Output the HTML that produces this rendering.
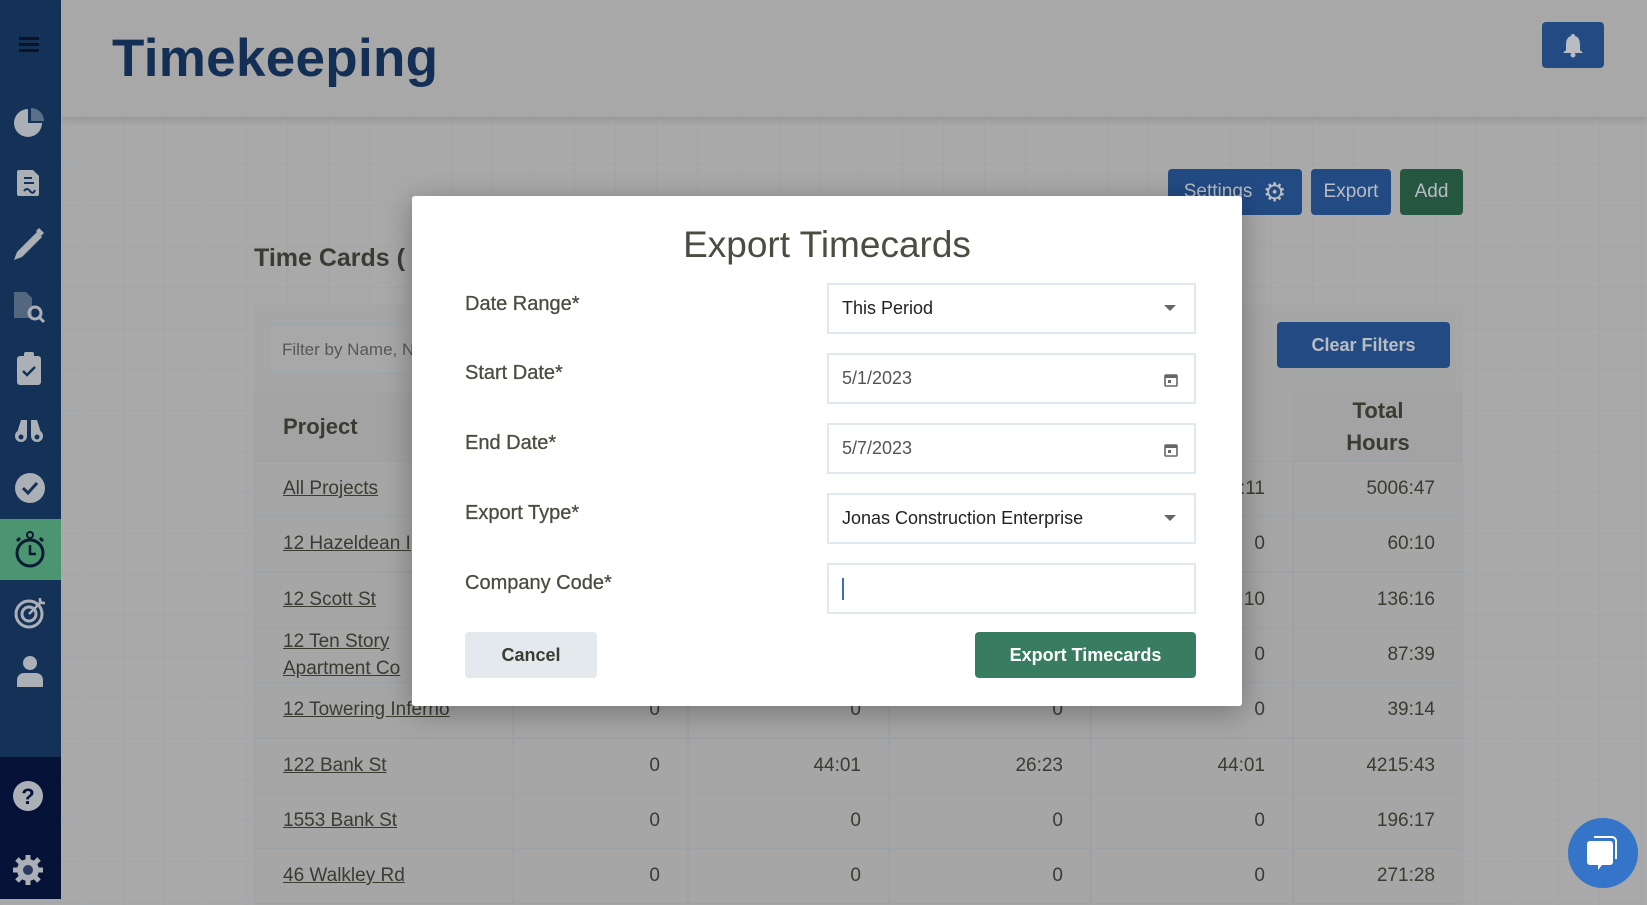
<!DOCTYPE html>
<html><head><meta charset="utf-8"><style>
*{box-sizing:border-box;margin:0;padding:0}
body{width:1647px;height:899px;overflow:hidden;position:relative;font-family:"Liberation Sans",sans-serif;background:#a9a9a9;
background-image:linear-gradient(#a3a6a8 1px,transparent 1px),linear-gradient(90deg,#a3a6a8 1px,transparent 1px);background-size:41px 41px;background-position:0 0}
.abs{position:absolute}
#side{left:0;top:0;width:61px;height:899px;background:#143258}
#side .bot{left:0;top:757px;width:61px;height:142px;background:#061237}
#side .act{left:0;top:519px;width:61px;height:61px;background:#4b9571}
#hdr{left:61px;top:0;width:1586px;height:117px;background:#a8a8a8;box-shadow:0 3px 6px rgba(0,0,0,.12)}
h1{position:absolute;left:112px;top:28px;font-size:53px;font-weight:bold;color:#142f55;letter-spacing:0.3px}
.btn{position:absolute;border-radius:4px;color:#b9bcc2;font-size:19px;display:flex;align-items:center;justify-content:center}
.panel{left:254px;top:305px;width:1209px;height:600px;background:#a6a6a6}
.cell{position:absolute;border:1.5px solid #9ca2a5;color:#3b3b31;font-size:19px;display:flex;align-items:center}
.cell.l{padding-left:28px;text-decoration:underline}
.cell.r{justify-content:flex-end;padding-right:27px}
#modal{left:412px;top:196px;width:830px;height:510px;background:#fff;border-radius:3px;box-shadow:0 6px 30px rgba(0,0,0,.3)}
.mt{position:absolute;left:0;width:830px;top:28px;text-align:center;font-size:37px;color:#4b4d40}
.lab{position:absolute;left:53px;font-size:20px;color:#4b4d40;-webkit-text-stroke:0.3px #4b4d40}
.inp{position:absolute;left:415px;width:369px;height:51px;border:2px solid #e2e9ee;font-size:18px;color:#222;display:flex;align-items:center;padding-left:13px}
.inp.g{color:#555}
.caret{position:absolute;right:18px;top:20px;width:0;height:0;border-left:6px solid transparent;border-right:6px solid transparent;border-top:6px solid #666}
</style></head><body>
<div id="side" class="abs">
 <div class="abs act"></div><div class="abs bot"></div>
 <svg class="abs" style="left:0;top:0" width="61" height="899" fill="#abafb6">
  <rect x="19" y="37" width="20" height="3" fill="#0b1325"/><rect x="19" y="43" width="20" height="3" fill="#0b1325"/><rect x="19" y="49" width="20" height="3" fill="#0b1325"/>
  <path d="M28 109a14 14 0 1 0 14 14h-14z"/><path d="M31 108v13h13a13 13 0 0 0-13-13z" fill="#5a6f8a"/>
  <path d="M19 170h14l6 6v18a2 2 0 0 1-2 2h-18a2 2 0 0 1-2-2v-22a2 2 0 0 1 2-2z"/><rect x="24" y="177" width="8" height="2" fill="#143258"/><rect x="24" y="182" width="10" height="2" fill="#143258"/><path d="M24 191q3-4 6 0t5-1" stroke="#143258" stroke-width="2" fill="none"/>
  <path d="M14 260l3-8 20-20 5 5-20 20z"/><path d="M36 231l3-3 5 5-3 3z"/>
  <path d="M14 292h12l6 6v20h-18z" fill="#53677f"/><circle cx="35" cy="313" r="6" fill="none" stroke="#abafb6" stroke-width="3"/><path d="M39 317l5 5" stroke="#abafb6" stroke-width="3"/>
  <rect x="17" y="356" width="24" height="29" rx="3"/><rect x="24" y="352" width="10" height="6" rx="2"/><path d="M23 371l4 4 8-8" stroke="#143258" stroke-width="2.5" fill="none"/>
  <path d="M16 436l5-16h6v16zM31 436v-16h6l5 16z"/><circle cx="21" cy="436" r="6"/><circle cx="37" cy="436" r="6"/><circle cx="21" cy="437" r="2.5" fill="#143258"/><circle cx="37" cy="437" r="2.5" fill="#143258"/>
  <circle cx="30" cy="488" r="15"/><path d="M23 488l5 5 9-10" stroke="#143258" stroke-width="3" fill="none"/>
  <circle cx="30" cy="553" r="13" fill="none" stroke="#0c1a33" stroke-width="3"/><circle cx="30" cy="535" r="3" fill="none" stroke="#0c1a33" stroke-width="2"/><path d="M30 545v9h6" stroke="#0c1a33" stroke-width="2.5" fill="none"/><path d="M17 541l3-3M43 541l-3-3" stroke="#0c1a33" stroke-width="3"/>
  <circle cx="29" cy="614" r="13" fill="none" stroke="#abafb6" stroke-width="3"/><circle cx="29" cy="614" r="7" fill="none" stroke="#abafb6" stroke-width="3"/><path d="M29 614l13-13M40 598v5h5" stroke="#abafb6" stroke-width="2.5" fill="none"/>
  <circle cx="30" cy="663" r="7"/><path d="M17 687v-7a7 7 0 0 1 7-7h12a7 7 0 0 1 7 7v7z"/>
  <circle cx="28" cy="796" r="15"/><text x="28" y="804" text-anchor="middle" font-size="22" font-weight="bold" fill="#061237" font-family="Liberation Sans">?</text>
  <circle cx="28" cy="870" r="11"/><g stroke="#abafb6" stroke-width="5"><path d="M28 855v30M13 870h30M17 859l22 22M39 859l-22 22"/></g><circle cx="28" cy="870" r="5" fill="#2a3960"/>
 </svg>
</div>
<div id="hdr" class="abs"></div>
<h1>Timekeeping</h1>
<div class="btn" style="left:1542px;top:22px;width:62px;height:46px;background:#224b83"><svg width="22" height="26" fill="#b9bcc2"><path d="M11 2a2 2 0 0 1 2 2c4 1 5 5 5 9v5l3 3H1l3-3v-5c0-4 1-8 5-9a2 2 0 0 1 2-2z"/><circle cx="11" cy="23" r="2.5"/></svg></div>
<div class="abs" style="left:254px;top:244px;font-size:25px;font-weight:bold;color:#3a3b33">Time Cards (</div>
<div class="btn" style="left:1168px;top:169px;width:134px;height:46px;background:#224b83">Settings&nbsp;&nbsp;<span style="font-size:26px">⚙</span></div>
<div class="btn" style="left:1311px;top:169px;width:80px;height:46px;background:#224b83">Export</div>
<div class="btn" style="left:1400px;top:169px;width:63px;height:46px;background:#255740">Add</div>
<div class="abs panel"></div>
<div class="abs" style="left:268px;top:324px;width:160px;height:50px;border:2px solid #9fa7ab;background:#a8a8a8;font-size:17px;color:#575757;padding:14px 0 0 12px;white-space:nowrap;overflow:hidden">Filter by Name, N</div>
<div class="btn" style="left:1277px;top:322px;width:173px;height:46px;background:#224b83;font-weight:bold;font-size:18px">Clear Filters</div>
<div class="cell" style="left:254px;top:393px;width:259px;height:68px;padding-left:28px;font-size:22px;font-weight:bold;background:#a3a3a3;border-color:#a3a3a3">Project</div>
<div class="cell" style="left:1293px;top:393px;width:170px;height:68px;justify-content:center;text-align:center;font-size:22px;font-weight:bold;line-height:32px;background:#a3a3a3;border-color:#9ca2a5">Total<br>Hours</div>
<div id="rows"></div>
<div id="modal" class="abs">
 <div class="mt">Export Timecards</div>
 <div class="lab" style="top:97px">Date Range*</div>
 <div class="lab" style="top:166px">Start Date*</div>
 <div class="lab" style="top:236px">End Date*</div>
 <div class="lab" style="top:306px">Export Type*</div>
 <div class="lab" style="top:376px">Company Code*</div>
 <div class="inp" style="top:87px">This Period<span class="caret"></span></div>
 <div class="inp g" style="top:157px">5/1/2023<svg class="abs" style="right:16px;top:17px" width="14" height="15"><rect x="1" y="3" width="12" height="11" rx="1" fill="none" stroke="#666" stroke-width="1.6"/><rect x="1" y="3" width="12" height="3" fill="#666"/><rect x="4" y="8" width="3" height="3" fill="#666"/></svg></div>
 <div class="inp g" style="top:227px">5/7/2023<svg class="abs" style="right:16px;top:17px" width="14" height="15"><rect x="1" y="3" width="12" height="11" rx="1" fill="none" stroke="#666" stroke-width="1.6"/><rect x="1" y="3" width="12" height="3" fill="#666"/><rect x="4" y="8" width="3" height="3" fill="#666"/></svg></div>
 <div class="inp" style="top:297px">Jonas Construction Enterprise<span class="caret"></span></div>
 <div class="inp" style="top:367px"><span style="display:block;width:1.5px;height:22px;background:#3a6fc0"></span></div>
 <div class="btn" style="left:53px;top:436px;width:132px;height:46px;background:#e3e9ed;color:#3b3d33;font-weight:bold;font-size:18px">Cancel</div>
 <div class="btn" style="left:563px;top:436px;width:221px;height:46px;background:#387d62;color:#fff;font-weight:bold;font-size:18px">Export Timecards</div>
</div>
<div class="abs" style="left:1568px;top:818px;width:70px;height:70px;border-radius:50%;background:#3474c9"><svg style="position:absolute;left:18px;top:17px" width="36" height="38"><path d="M8 2h18a4 4 0 0 1 4 4v18" stroke="#fff" stroke-width="2" fill="none"/><path d="M4 6h20a3 3 0 0 1 3 3v18a3 3 0 0 1-3 3H16l-4 5v-5H4a3 3 0 0 1-3-3V9a3 3 0 0 1 3-3z" fill="#fff"/></svg></div>
<script>
var rows=[["All Projects","","","","8:11","5006:47"],["12 Hazeldean I","","","","0","60:10"],["12 Scott St","","","",":10","136:16"],["12 Ten Story<br>Apartment Co","","","","0","87:39"],["12 Towering Inferno","0","0","0","0","39:14"],["122 Bank St","0","44:01","26:23","44:01","4215:43"],["1553 Bank St","0","0","0","0","196:17"],["46 Walkley Rd","0","0","0","0","271:28"]];
var cols=[254,513,688,889,1091,1293,1463];var h='';
rows.forEach(function(r,i){var t=461+i*55.3;for(var c=0;c<6;c++){h+='<div class="cell '+(c==0?'l':'r')+'" style="left:'+cols[c]+'px;top:'+t+'px;width:'+(cols[c+1]-cols[c])+'px;height:56px;'+(i==3&&c==0?'line-height:27px;':'')+'">'+r[c]+'</div>';}});
document.getElementById('rows').innerHTML=h;
</script>
</body></html>
